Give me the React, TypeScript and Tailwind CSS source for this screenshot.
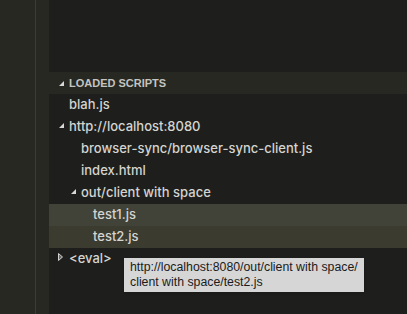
import React from 'react';

type Row = {
  label: string;
  depth: number;
  twisty?: 'open' | 'closed';
  bg?: string;
};

const rows: Row[] = [
  { label: 'blah.js', depth: 0 },
  { label: 'http://localhost:8080', depth: 0, twisty: 'open' },
  { label: 'browser-sync/browser-sync-client.js', depth: 1 },
  { label: 'index.html', depth: 1 },
  { label: 'out/client with space', depth: 1, twisty: 'open' },
  { label: 'test1.js', depth: 2, bg: 'bg-[#414339]' },
  { label: 'test2.js', depth: 2, bg: 'bg-[#3c3b30]' },
  { label: '<eval>', depth: 0, twisty: 'closed' },
];

const padByDepth = ['pl-[20px]', 'pl-[32px]', 'pl-[44px]'];

function Twisty({ kind }: { kind: 'open' | 'closed' }) {
  if (kind === 'open') {
    return (
      <svg width="5" height="5" viewBox="0 0 5 5" className="absolute left-[-10px] top-[6px]">
        <path d="M5 0 L5 5 L0 5 Z" fill="#d8d8d8" />
      </svg>
    );
  }
  return (
    <svg width="5" height="8" viewBox="0 0 5 8" className="absolute left-[-11px] top-[4px]">
      <path d="M0.5 0.5 L4.5 4 L0.5 7.5 Z" fill="#6a6a66" stroke="#d0d0d0" strokeWidth="1" />
    </svg>
  );
}

export default function App() {
  return (
    <div className="flex h-[314px] w-[407px] overflow-hidden bg-[#272822] font-['Inter','Liberation_Sans',Arial,sans-serif]">
      <div className="w-[35px] shrink-0 bg-[#272822]" />
      <div className="w-px shrink-0 bg-[#3b3c35]" />
      <div className="w-[13px] shrink-0 bg-[#272822]" />
      <div className="relative flex flex-1 flex-col bg-[#1e1f1c]">
        <div className="h-[72px]" />
        <div className="flex h-[22px] items-center bg-[#272822] pl-[20px] font-['Liberation_Sans',Arial,sans-serif] text-[11px] font-bold text-[#c3c3c0]">
          <span className="relative">
            <Twisty kind="open" />
            LOADED SCRIPTS
          </span>
        </div>
        {rows.map((r) => (
          <div
            key={r.label}
            className={`flex h-[22px] items-center text-[13px] font-medium text-[#d4d4d0] ${padByDepth[r.depth]} ${r.bg ?? ''}`}
          >
            <span className="relative whitespace-nowrap">
              {r.twisty && <Twisty kind={r.twisty} />}
              {r.label}
            </span>
          </div>
        ))}
        <div className="absolute left-[75px] top-[258px] bg-[#d6d6d6] px-[6px] py-[2px] font-['Liberation_Sans',Arial,sans-serif] text-[12.3px] leading-[15px] text-[#1b1b1b] shadow-sm">
          <div className="whitespace-nowrap">http://localhost:8080/out/client with space/</div>
          <div className="whitespace-nowrap">client with space/test2.js</div>
        </div>
      </div>
    </div>
  );
}
